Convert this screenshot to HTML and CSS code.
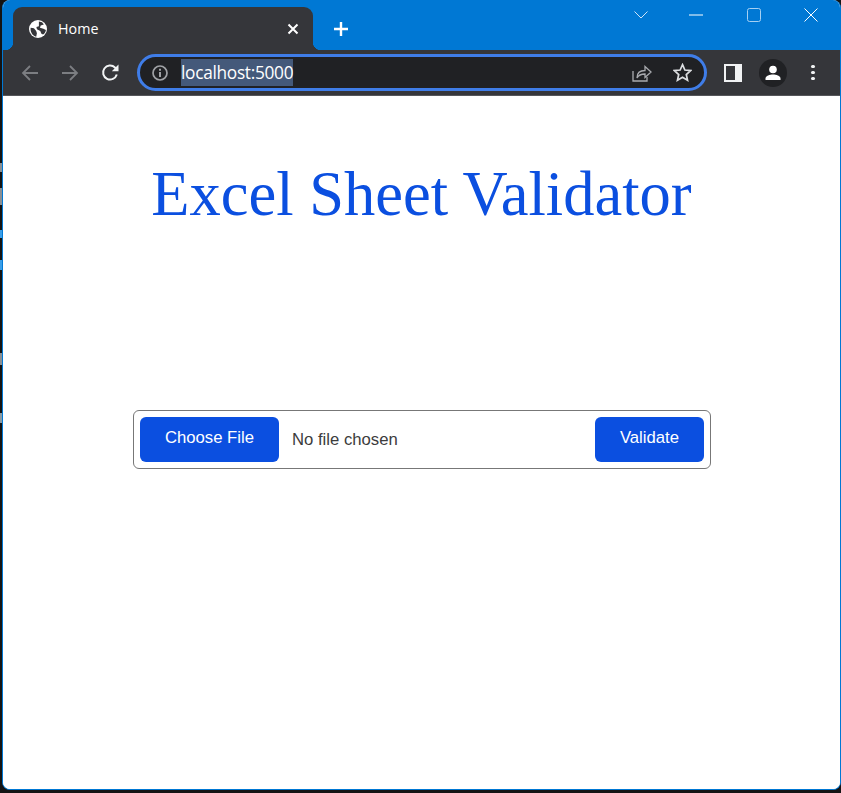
FILE: index.html
```html
<!DOCTYPE html>
<html lang="en">
<head>
<meta charset="utf-8">
<title>Home</title>
<link rel="stylesheet" href="styles.css">
</head>
<body>
<div class="window">
  <header class="titlebar">
    <div class="tab">
      <svg class="tab-globe" viewBox="0 0 20 20" width="18" height="18"><circle cx="10" cy="10" r="10" fill="#fff"/><path d="M1.800 8.500l3.700.7 2.500 3 .8 2.500-.8 3.800C4 17.500 1.300 13.500 1.800 8.500zM11 1.800l3.500.8 2 2.400-3.500 1-.8 2.700 3.800.9 2.800 1.400c-.4 2.200-1.500 4-3.200 5.200l-1.800-1-1.300-3-3.700-1.800-.6-2.700L11 7z" fill="#35363a"/></svg>
      <span class="tab-title">Home</span>
      <svg class="tab-close" viewBox="0 0 12 12" width="12" height="12"><path d="M1.500 1.500l9 9M10.500 1.500l-9 9" stroke="#fff" stroke-width="2" fill="none"/></svg>
    </div>
    <svg class="new-tab" viewBox="0 0 16 16" width="16" height="16"><path d="M8 1v14M1 8h14" stroke="#fff" stroke-width="2.400" fill="none"/></svg>
    <div class="win-controls">
      <svg viewBox="0 0 14 8" width="14" height="8"><path d="M.5.500L7 7 13.500.5" stroke="#cfe4f7" stroke-width="1" fill="none"/></svg>
      <svg viewBox="0 0 14 2" width="14" height="2"><path d="M0 1h14" stroke="#fff" stroke-width="1" fill="none"/></svg>
      <svg viewBox="0 0 14 14" width="14" height="14"><rect x=".5" y=".5" width="13" height="13" rx="2" stroke="#a6d0f2" stroke-width="1" fill="none"/></svg>
      <svg viewBox="0 0 14 14" width="14" height="14"><path d="M.5.500l13 13M13.500.5l-13 13" stroke="#fff" stroke-width="1" fill="none"/></svg>
    </div>
  </header>
  <nav class="toolbar">
    <svg class="nav-icon" viewBox="0 0 18 18" width="18" height="18"><path d="M17 9H2M9 2L2 9l7 7" stroke="#7c7e82" stroke-width="1.800" fill="none"/></svg>
    <svg class="nav-icon" viewBox="0 0 18 18" width="18" height="18"><path d="M1 9h15M9 2l7 7-7 7" stroke="#7c7e82" stroke-width="1.800" fill="none"/></svg>
    <svg class="nav-icon" viewBox="0 0 18 18" width="18" height="18"><path d="M15.800 10.500A7 7 0 1 1 14 3.500L16.200 5.500" stroke="#f1f3f4" stroke-width="2" fill="none"/><path d="M17.500.6V7.300h-6.700z" fill="#f1f3f4"/></svg>
    <div class="omnibox">
      <svg class="info" viewBox="0 0 16 16" width="16" height="16"><circle cx="8" cy="8" r="7" stroke="#a0a2a6" stroke-width="1.700" fill="none"/><path d="M8 7v5M8 3.800v2" stroke="#a0a2a6" stroke-width="2" fill="none"/></svg>
      <span class="url">localhost:5000</span>
      <svg class="share" viewBox="0 0 20 18" width="20" height="18"><path d="M1 7v10h14v-4" stroke="#a9abaf" stroke-width="1.300" fill="none"/><path d="M5 14c0-5 3-7.500 8-7.500V2.500l6 5.500-6 5.500V10c-4 0-6.500 1-8 4z" stroke="#a9abaf" stroke-width="1.300" fill="none"/></svg>
      <svg class="star" viewBox="0 0 20 20" width="19" height="19"><path d="M10 1.800l2.500 5.600 6.100.6-4.600 4.100 1.300 6-5.300-3.100-5.300 3.100 1.300-6L1.400 8l6.100-.6z" stroke="#dcdee0" stroke-width="1.800" fill="none"/></svg>
    </div>
    <div class="side-panel"><span class="side-panel-gap"></span></div>
    <div class="avatar"><svg viewBox="0 0 18 18" width="18" height="18"><circle cx="9" cy="5.500" r="3.800" fill="#fff"/><path d="M1.500 16v-1.500c0-2.800 4.500-4 7.500-4s7.500 1.200 7.500 4V16z" fill="#fff"/></svg></div>
    <div class="kebab"><i></i><i></i><i></i></div>
  </nav>
  <main class="page">
    <h1 class="heading">Excel Sheet Validator</h1>
    <form class="upload">
      <button type="button" class="btn btn-choose">Choose File</button>
      <span class="no-file">No file chosen</span>
      <button type="button" class="btn btn-validate">Validate</button>
    </form>
  </main>
</div>
</body>
</html>
```
FILE: styles.css
```css
* { box-sizing: border-box; }
html, body { margin: 0; height: 100%; overflow: hidden; }
body {
  background: linear-gradient(180deg,
    #141414 163px, #8a8f94 163px, #8a8f94 172px,
    #141414 172px, #141414 188px, #8a8f94 188px, #8a8f94 205px,
    #141414 205px, #141414 230px, #3a9ee8 230px, #3a9ee8 238px,
    #141414 238px, #141414 260px, #3a9ee8 260px, #3a9ee8 270px,
    #141414 270px, #141414 353px, #8a8f94 353px, #8a8f94 365px,
    #141414 365px, #141414 413px, #8a9aa4 413px, #8a9aa4 423px,
    #141414 423px);
  padding: 0 0 3px 2px;
}
.window {
  height: 790px;
  display: flex;
  flex-direction: column;
  background: #fff;
  border: 1px solid #0078d4;
  border-top: 0;
  border-radius: 8px;
  overflow: hidden;
}
.titlebar {
  height: 50px;
  flex: none;
  background: #0078d4;
  display: flex;
  align-items: flex-end;
  padding-left: 10px;
}
.tab {
  width: 300px;
  height: 43px;
  background: #35363a;
  border-radius: 9px 9px 0 0;
  display: flex;
  align-items: center;
  padding: 0 14px 0 16px;
  position: relative;
  color: #fff;
  font: 14.300px "Open Sans", "Noto Sans", sans-serif;
}
.tab::before, .tab::after {
  content: "";
  position: absolute;
  bottom: 0;
  width: 8px;
  height: 8px;
}
.tab::before { left: -8px; background: radial-gradient(circle at 0 0, #0078d4 8px, #35363a 8.500px); }
.tab::after { right: -8px; background: radial-gradient(circle at 100% 0, #0078d4 8px, #35363a 8.500px); }
.tab-globe { flex: none; }
.tab-title { margin-left: 11px; flex: 1; }
.tab-close { flex: none; }
.new-tab { margin: 0 0 13px 20px; flex: none; }
.win-controls {
  margin-left: auto;
  align-self: flex-start;
  display: flex;
  align-items: center;
  height: 30px;
  padding-right: 22px;
}
.win-controls svg:nth-child(1) { margin-right: 41px; }
.win-controls svg:nth-child(2) { margin-right: 44px; }
.win-controls svg:nth-child(3) { margin-right: 43px; }
.toolbar {
  height: 46px;
  flex: none;
  background: #35363a;
  border-bottom: 1px solid #55565a;
  display: flex;
  align-items: center;
  padding-left: 18px;
}
.nav-icon { flex: none; margin-right: 22px; }
.omnibox {
  width: 570px;
  height: 37px;
  margin-left: -4px;
  background: #202124;
  border: 3px solid #3f7de8;
  border-radius: 19px;
  display: flex;
  align-items: center;
  padding: 0 12px 0 12px;
  flex: none;
}
.info { flex: none; }
.url {
  margin-left: 13px;
  height: 27px;
  padding: 0;
  background: #44597a;
  color: #fff;
  font: 17.300px/27px "Open Sans", "Noto Sans", sans-serif;
  letter-spacing: -.3px;
}
.share { margin-left: auto; flex: none; }
.star { margin-left: 21px; flex: none; }
.side-panel {
  width: 18px;
  height: 18px;
  margin-left: 17px;
  background: #f1f3f4;
  padding: 2px 7px 2px 2px;
  flex: none;
}
.side-panel-gap { display: block; height: 100%; background: #35363a; }
.avatar {
  width: 28px;
  height: 28px;
  border-radius: 50%;
  background: #202124;
  margin-left: 17px;
  display: flex;
  align-items: center;
  justify-content: center;
  flex: none;
}
.kebab {
  margin-left: 24px;
  display: flex;
  flex-direction: column;
  gap: 2.500px;
  flex: none;
}
.kebab i { display: block; width: 3.500px; height: 3.500px; border-radius: 50%; background: #f1f3f4; }
.page {
  flex: 1;
  background: #fff;
  display: flex;
  flex-direction: column;
  align-items: center;
}
.heading {
  margin: 61px 0 0;
  font: 400 62.500px/74px "Liberation Serif", serif;
  color: #0b4fe0;
}
.upload {
  width: 578px;
  height: 59px;
  margin-top: 179px;
  margin-left: 1px;
  border: 1px solid #777;
  border-radius: 6px;
  display: flex;
  align-items: center;
  padding: 0 6px;
}
.btn {
  height: 45px;
  border: 0;
  border-radius: 6px;
  background: #0b4fe0;
  color: #fff;
  font: 16.700px "Liberation Sans", sans-serif;
  padding: 0 0 3px;
}
.btn-choose { width: 139px; }
.btn-validate { width: 109px; margin-left: auto; }
.no-file {
  margin-left: 13px;
  font: 16.700px "Liberation Sans", sans-serif;
  color: #3c3c3c;
}
```
